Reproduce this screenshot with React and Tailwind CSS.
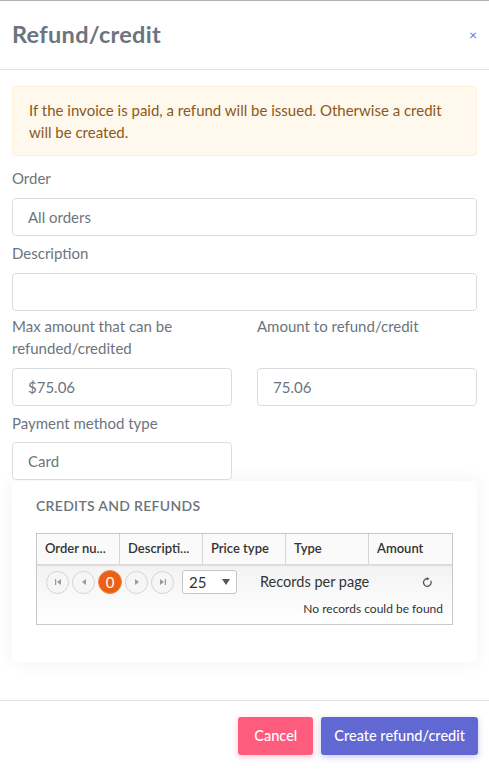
import React from "react";

const font = { fontFamily: "Lato, 'Open Sans', sans-serif" };

const Field = ({ label, value, className = "" }) => (
  <div className={className}>
    <div className="text-[15px] leading-[22px] text-[#6c757d] mb-[9px]">{label}</div>
    <div className="h-[38px] border border-[#dadde0] rounded-[4px] bg-white flex items-center px-[15px] text-[15px] text-[#6c757d]">
      {value}
    </div>
  </div>
);

const PagerBtn = ({ children }) => (
  <div className="w-[23px] h-[23px] rounded-full border border-[#d4d4d4] bg-[#f6f6f6] flex items-center justify-center text-[#9a9a9a]">
    {children}
  </div>
);

const App = () => {
  return (
    <div className="w-[489px] h-[771px] bg-white border-t border-[#aeb2b7] flex flex-col" style={font}>
      <div className="h-[69px] flex items-center justify-between pl-[12px] pr-[12px] border-b border-[#dee2e6]">
        <h1 className="text-[23.5px] font-bold text-[#6c757d] tracking-[0.3px]">Refund/credit</h1>
        <span className="text-[14px] text-[#6f73d8] leading-none">×</span>
      </div>

      <div className="px-[12px] pt-[16px]">
        <div className="bg-[#fff8ec] border border-[#fff0d9] rounded-[4px] px-[16px] py-[12px] text-[15px] leading-[22px] text-[#8a5a1a]">
          If the invoice is paid, a refund will be issued. Otherwise a credit will be created.
        </div>

        <Field className="mt-[11px]" label="Order" value="All orders" />
        <Field className="mt-[6px]" label="Description" value="" />

        <div className="grid grid-cols-2 gap-x-[25px] mt-[4px]">
          <div className="flex flex-col">
            <div className="text-[15px] leading-[22px] text-[#6c757d] mb-[9px]">
              Max amount that can be refunded/credited
            </div>
            <div className="h-[38px] border border-[#dadde0] rounded-[4px] flex items-center px-[15px] text-[15px] text-[#6c757d]">
              $75.06
            </div>
          </div>
          <div className="flex flex-col">
            <div className="text-[15px] leading-[22px] text-[#6c757d] mb-[9px] h-[44px]">
              Amount to refund/credit
            </div>
            <div className="h-[38px] border border-[#dadde0] rounded-[4px] flex items-center px-[15px] text-[15px] text-[#6c757d]">
              75.06
            </div>
          </div>
        </div>

        <div className="grid grid-cols-2 gap-x-[25px] mt-[6px]">
          <div>
            <div className="text-[15px] leading-[22px] text-[#6c757d] mb-[8px]">Payment method type</div>
            <div className="h-[38px] border border-[#dadde0] rounded-[4px] bg-white flex items-center px-[15px] text-[15px] text-[#6c757d]">
              Card
            </div>
          </div>
        </div>

        <div className="bg-white shadow-[0_0_20px_rgba(0,0,0,0.06)] rounded-[4px] px-[24px] pt-[14px] pb-[37px] mt-[1px]">
          <div className="text-[14px] font-semibold tracking-[0.3px] text-[#6c757d] uppercase">
            Credits and refunds
          </div>
          <div className="mt-[17px] border border-[#c8c8c8]">
            <div className="grid grid-cols-5 bg-[#fafafa] border-b-2 border-[#dcdcdc] h-[32px]">
              {["Order nu...", "Descripti...", "Price type", "Type", "Amount"].map((h, i) => (
                <div
                  key={h}
                  className={`flex items-center px-[8px] text-[13px] font-semibold text-[#333] ${i < 4 ? "border-r border-[#d6d6d6]" : ""}`}
                >
                  {h}
                </div>
              ))}
            </div>
            <div className="bg-gradient-to-b from-[#f3f3f3] to-white px-[9px] pt-[4px] pb-[6px]">
              <div className="flex items-center">
                <div className="flex items-center gap-[3px]">
                  <PagerBtn>
                    <svg width="8" height="8" viewBox="0 0 8 8"><rect x="1" y="1" width="1.2" height="6" fill="#9a9a9a" /><path d="M7 1 L3 4 L7 7 Z" fill="#9a9a9a" /></svg>
                  </PagerBtn>
                  <PagerBtn>
                    <svg width="8" height="8" viewBox="0 0 8 8"><path d="M6 1 L2 4 L6 7 Z" fill="#9a9a9a" /></svg>
                  </PagerBtn>
                  <div className="w-[24px] h-[24px] rounded-full bg-[#ec6014] border border-[#f08a4b] flex items-center justify-center text-white text-[15px]">
                    0
                  </div>
                  <PagerBtn>
                    <svg width="8" height="8" viewBox="0 0 8 8"><path d="M2 1 L6 4 L2 7 Z" fill="#9a9a9a" /></svg>
                  </PagerBtn>
                  <PagerBtn>
                    <svg width="8" height="8" viewBox="0 0 8 8"><path d="M1 1 L5 4 L1 7 Z" fill="#9a9a9a" /><rect x="5.8" y="1" width="1.2" height="6" fill="#9a9a9a" /></svg>
                  </PagerBtn>
                </div>
                <div className="ml-[8px] w-[55px] h-[24px] border border-[#c5c5c5] rounded-[3px] bg-white flex items-center justify-between pl-[6px] pr-[6px] text-[15px] text-[#333]">
                  <span>25</span>
                  <svg width="8" height="6" viewBox="0 0 8 6"><path d="M0 0 L8 0 L4 6 Z" fill="#555" /></svg>
                </div>
                <span className="ml-[23px] text-[14.5px] text-[#333]">Records per page</span>
                <svg className="ml-auto mr-[10px]" width="11" height="11" viewBox="0 0 12 12" fill="none">
                  <path d="M9.6 4.2 A4.2 4.2 0 1 1 6 1.8" stroke="#555" strokeWidth="1.4" />
                  <path d="M5.2 0 L8.2 1.9 L5.2 3.8 Z" fill="#555" />
                </svg>
              </div>
              <div className="text-right text-[12px] text-[#333] mt-[6px] pr-0">No records could be found</div>
            </div>
          </div>
        </div>
      </div>

      <div className="mt-auto border-t border-[#dee2e6] h-[71px] flex items-start justify-end gap-[8px] px-[11px] pt-[16px]">
        <button className="h-[38px] px-[16px] rounded-[3px] bg-[#fe5c7c] text-white text-[14.5px] font-medium shadow-[0_2px_6px_rgba(254,92,124,0.35)]">
          Cancel
        </button>
        <button className="h-[38px] px-[13px] rounded-[3px] bg-[#6168d2] text-white text-[14.5px] font-medium shadow-[0_2px_6px_rgba(97,104,210,0.35)]">
          Create refund/credit
        </button>
      </div>
    </div>
  );
};

export default App;
